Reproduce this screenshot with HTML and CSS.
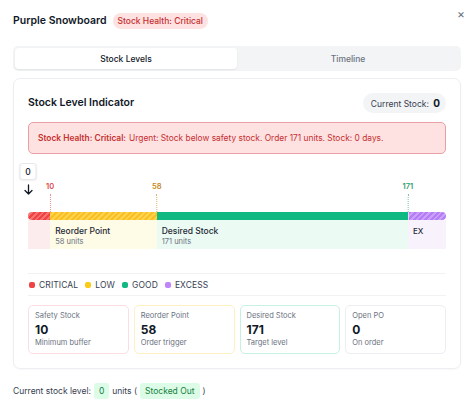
FILE: index.html
```html
<!DOCTYPE html>
<html>
<head>
<meta charset="utf-8">
<link rel="stylesheet" href="styles.css">
</head>
<body>
<div class="modal">
  <div class="header">
    <span class="title">Purple Snowboard</span>
    <span class="badge">Stock Health: Critical</span>
    <span class="close">×</span>
  </div>
  <div class="tabs">
    <div class="tab active">Stock Levels</div>
    <div class="tab">Timeline</div>
  </div>
  <div class="card">
    <div class="card-head">
      <span class="card-title">Stock Level Indicator</span>
      <span class="pill">Current Stock: <b>0</b></span>
    </div>
    <div class="alert"><b>Stock Health: Critical:</b> Urgent: Stock below safety stock. Order 171 units. Stock: 0 days.</div>
    <div class="indicator">
      <div class="markers">
        <div class="current" style="left:0%">
          <span class="cur-box">0</span>
          <svg class="cur-arrow" width="10" height="11" viewBox="0 0 10 11"><path d="M5 1 V10 M1.5 6.5 L5 10 L8.5 6.5" fill="none" stroke="#111827" stroke-width="1.3" stroke-linecap="round" stroke-linejoin="round"/></svg>
        </div>
        <div class="mark red" style="left:5.3%"><span>10</span><i></i></div>
        <div class="mark amber" style="left:30.8%"><span>58</span><i></i></div>
        <div class="mark green" style="left:90.9%"><span>171</span><i></i></div>
      </div>
      <div class="bar">
        <div class="seg seg-crit" style="width:5.3%"></div>
        <div class="seg seg-low" style="width:25.5%"></div>
        <div class="seg seg-good" style="width:60.1%"></div>
        <div class="seg seg-ex" style="width:9.1%"></div>
      </div>
      <div class="zones">
        <div class="zone z-crit" style="width:5.3%"></div>
        <div class="zone z-low" style="width:25.5%"><div class="zl">Reorder Point</div><div class="zs">58 units</div></div>
        <div class="zone z-good" style="width:60.1%"><div class="zl">Desired Stock</div><div class="zs">171 units</div></div>
        <div class="zone z-ex" style="width:9.1%"><div class="zl ex">EX</div></div>
      </div>
    </div>
    <div class="legend">
      <span class="li"><i class="dot d-crit"></i>CRITICAL</span>
      <span class="li"><i class="dot d-low"></i>LOW</span>
      <span class="li"><i class="dot d-good"></i>GOOD</span>
      <span class="li"><i class="dot d-ex"></i>EXCESS</span>
    </div>
    <div class="stats">
      <div class="stat s-red"><div class="sl">Safety Stock</div><div class="sv">10</div><div class="ss">Minimum buffer</div></div>
      <div class="stat s-yellow"><div class="sl">Reorder Point</div><div class="sv">58</div><div class="ss">Order trigger</div></div>
      <div class="stat s-green"><div class="sl">Desired Stock</div><div class="sv">171</div><div class="ss">Target level</div></div>
      <div class="stat s-gray"><div class="sl">Open PO</div><div class="sv">0</div><div class="ss">On order</div></div>
    </div>
  </div>
  <div class="footer">Current stock level: <span class="chip">0</span> units ( <span class="chip">Stocked Out</span> )</div>
</div>
</body>
</html>
```
FILE: styles.css
```css
* { box-sizing: border-box; }
body {
  margin: 0;
  background: #fff;
  font-family: Inter, "Noto Sans", sans-serif;
  color: #111827;
}
.modal {
  padding: 12px 13px 0 13px;
}
.header {
  display: flex;
  align-items: center;
  gap: 6px;
  height: 17px;
  position: relative;
}
.title {
  font-size: 10.5px;
  font-weight: 600;
  color: #111827;
}
.badge {
  background: #fee2e2;
  color: #c53030;
  font-size: 8.5px;
  font-weight: 500;
  padding: 3px 5px;
  border-radius: 9px;
}
.close {
  margin-left: auto;
  margin-right: -4px;
  font-size: 12px;
  color: #6b7280;
  margin-top: -14px;
}
.tabs {
  margin-top: 17px;
  display: flex;
  background: #f3f4f6;
  border-radius: 5px;
  padding: 2px;
  height: 25px;
}
.tab {
  flex: 1;
  display: flex;
  align-items: center;
  justify-content: center;
  font-size: 8.5px;
  font-weight: 500;
  color: #6b7280;
  border-radius: 4px;
}
.tab.active {
  background: #fff;
  color: #111827;
  box-shadow: 0 1px 2px rgba(0,0,0,0.08);
}
.card {
  margin-top: 7px;
  border: 1px solid #eceef1;
  border-radius: 7px;
  padding: 14px 14px 14px 14px;
  box-shadow: 0 1px 2px rgba(0,0,0,0.03);
}
.card-head {
  display: flex;
  align-items: center;
  justify-content: space-between;
  height: 19px;
}
.card-title {
  font-size: 10.5px;
  font-weight: 600;
}
.pill {
  background: #f3f4f6;
  border-radius: 10px;
  padding: 4px 6px 4px 8px;
  font-size: 8.5px;
  color: #374151;
}
.pill b {
  font-size: 10px;
  font-weight: 700;
  color: #111827;
  margin-left: 2px;
}
.alert {
  margin-top: 10px;
  background: #fee2e2;
  border: 1px solid #e8a0a6;
  border-radius: 5px;
  height: 32px;
  display: flex;
  align-items: center;
  padding: 0 9px;
  font-size: 8.4px;
  color: #c53030;
  white-space: nowrap;
}
.alert b { font-weight: 600; margin-right: 3px; }
.indicator {
  margin-top: 7px;
}
.markers {
  position: relative;
  height: 51px;
}
.current {
  position: absolute;
  top: 2px;
  transform: translateX(-50%);
  display: flex;
  flex-direction: column;
  align-items: center;
}
.cur-box {
  width: 17px;
  height: 17px;
  border: 1px solid #e5e7eb;
  border-radius: 3px;
  background: #fff;
  font-size: 8.5px;
  font-weight: 500;
  display: flex;
  align-items: center;
  justify-content: center;
  box-shadow: 0 1px 2px rgba(0,0,0,0.06);
}
.cur-arrow {
  margin-top: 4px;
  display: block;
}
.mark {
  position: absolute;
  top: 21px;
  bottom: 0;
  transform: translateX(-50%);
  display: flex;
  flex-direction: column;
  align-items: center;
}
.mark span {
  font-size: 7.5px;
  font-weight: 600;
  line-height: 10px;
}
.mark i {
  flex: 1;
  border-left: 1px dotted currentColor;
  margin-top: 2px;
  opacity: 0.6;
}
.mark.red { color: #dc4a4a; }
.mark.amber { color: #c8861a; }
.mark.green { color: #2f9e6e; }
.bar {
  display: flex;
  height: 8px;
  border-radius: 4px;
  overflow: hidden;
}
.seg { height: 100%; }
.seg-crit {
  background: repeating-linear-gradient(135deg, #ef4444 0 2px, #f87171 2px 4px);
}
.seg-low {
  background: repeating-linear-gradient(135deg, #fbbf24 0 2px, #fcd34d 2px 4px);
}
.seg-good { background: #10b981; }
.seg-ex {
  background: repeating-linear-gradient(135deg, #b57cf5 0 2px, #c9a0fa 2px 4px);
  border-left: 1px solid #e9d5ff;
}
.zones {
  display: flex;
  height: 29px;
}
.zone {
  padding: 6px 5px 0 5px;
}
.z-crit { background: #fdecee; }
.z-low { background: #fefbe6; }
.z-good { background: #ebfaf2; }
.z-ex { background: #f8f2fd; }
.zl {
  font-size: 8.5px;
  font-weight: 500;
  color: #1f2937;
  line-height: 11px;
}
.zl.ex { margin-top: 0px; font-size: 8px; }
.zs {
  font-size: 7.5px;
  color: #6b7280;
  line-height: 10px;
}
.legend {
  margin-top: 24px;
  border-top: 1px solid #f1f2f4;
  border-bottom: 1px solid #f1f2f4;
  height: 23px;
  display: flex;
  align-items: center;
  gap: 7px;
  padding-left: 1px;
}
.li {
  display: flex;
  align-items: center;
  gap: 4px;
  font-size: 8.5px;
  color: #374151;
  letter-spacing: 0.1px;
}
.dot {
  width: 6px;
  height: 6px;
  border-radius: 2px;
  display: inline-block;
}
.d-crit { background: #ef4444; }
.d-low { background: #facc15; }
.d-good { background: #10b981; }
.d-ex { background: #c084fc; }
.stats {
  margin-top: 9px;
  display: grid;
  grid-template-columns: repeat(4, 1fr);
  gap: 5px;
}
.stat {
  border: 1px solid #e5e7eb;
  border-radius: 5px;
  height: 49px;
  padding: 5px 6px;
}
.s-red { border-color: #fbdde3; }
.s-yellow { border-color: #fdf1c4; }
.s-green { border-color: #c8f0e0; }
.s-gray { border-color: #eceef1; }
.sl {
  font-size: 7.5px;
  color: #6b7280;
  line-height: 10px;
}
.sv {
  font-size: 12px;
  font-weight: 700;
  color: #111827;
  line-height: 15px;
  margin-top: 1px;
}
.ss {
  font-size: 7.5px;
  color: #6b7280;
  line-height: 11px;
}
.footer {
  margin-top: 14px;
  font-size: 8.5px;
  color: #374151;
  display: flex;
  align-items: center;
  gap: 3px;
}
.chip {
  background: #dcfce7;
  color: #15803d;
  border-radius: 3px;
  padding: 3px 5px;
  font-size: 8.5px;
}
```
